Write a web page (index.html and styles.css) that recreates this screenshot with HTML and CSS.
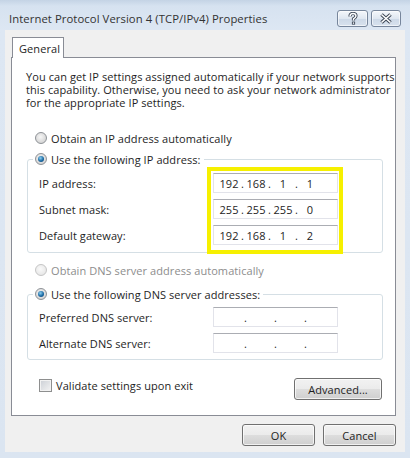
FILE: index.html
```html
<!DOCTYPE html>
<html lang="en">
<head>
    <meta charset="UTF-8">
    <title>Internet Protocol Version 4 (TCP/IPv4) Properties</title>
    <link rel="stylesheet" href="styles.css">
</head>
<body>

    <div class="window">
        <!-- Title bar -->
        <div class="titlebar">
            <span class="title">Internet Protocol Version 4 (TCP/IPv4) Properties</span>
            <div class="caption-buttons">
                <button class="caption-btn">
                    <svg width="12" height="13" viewBox="0 0 12 13">
                        <path d="M3 4.5 Q3 1.5 6 1.5 Q9 1.5 9 4 Q9 5.5 6.5 6.8 L6.5 8.5" fill="none" stroke="#3c4656" stroke-width="3.2"/>
                        <rect x="4.9" y="9.6" width="3.2" height="3" fill="#3c4656"/>
                        <path d="M3 4.5 Q3 1.5 6 1.5 Q9 1.5 9 4 Q9 5.5 6.5 6.8 L6.5 8.5" fill="none" stroke="#fff" stroke-width="1.4"/>
                        <rect x="5.8" y="10.4" width="1.4" height="1.4" fill="#fff"/>
                    </svg>
                </button>
                <button class="caption-btn">
                    <svg width="14" height="11" viewBox="0 0 14 11">
                        <path d="M2.5 1.5 L11.5 9.5 M11.5 1.5 L2.5 9.5" stroke="#3c4656" stroke-width="3.6"/>
                        <path d="M2.5 1.5 L11.5 9.5 M11.5 1.5 L2.5 9.5" stroke="#fff" stroke-width="1.6"/>
                    </svg>
                </button>
            </div>
        </div>

        <div class="client">
            <div class="tabs">
                <div class="tab">General</div>
            </div>

            <div class="panel">
                <div class="intro">
                    <div>You can get IP settings assigned automatically if your network supports</div>
                    <div>this capability. Otherwise, you need to ask your network administrator</div>
                    <div>for the appropriate IP settings.</div>
                </div>

                <div class="option option-first">
                    <span class="radio"></span>
                    <span>Obtain an IP address automatically</span>
                </div>

                <fieldset class="group group-ip">
                    <legend class="option">
                        <span class="radio checked"></span>
                        <span>Use the following IP address:</span>
                    </legend>
                    <div class="fields">
                        <div class="field">
                            <span class="label">IP address:</span>
                            <div class="ipbox"><span>192</span><i>.</i><span>168</span><i>.</i><span>1</span><i>.</i><span>1</span></div>
                        </div>
                        <div class="field">
                            <span class="label">Subnet mask:</span>
                            <div class="ipbox"><span>255</span><i>.</i><span>255</span><i>.</i><span>255</span><i>.</i><span>0</span></div>
                        </div>
                        <div class="field">
                            <span class="label">Default gateway:</span>
                            <div class="ipbox"><span>192</span><i>.</i><span>168</span><i>.</i><span>1</span><i>.</i><span>2</span></div>
                        </div>
                        <div class="highlight"></div>
                    </div>
                </fieldset>

                <div class="option option-dns disabled">
                    <span class="radio"></span>
                    <span>Obtain DNS server address automatically</span>
                </div>

                <fieldset class="group group-dns">
                    <legend class="option">
                        <span class="radio checked"></span>
                        <span>Use the following DNS server addresses:</span>
                    </legend>
                    <div class="fields">
                        <div class="field">
                            <span class="label">Preferred DNS server:</span>
                            <div class="ipbox empty"><span></span><i>.</i><span></span><i>.</i><span></span><i>.</i><span></span></div>
                        </div>
                        <div class="field">
                            <span class="label">Alternate DNS server:</span>
                            <div class="ipbox empty"><span></span><i>.</i><span></span><i>.</i><span></span><i>.</i><span></span></div>
                        </div>
                    </div>
                </fieldset>

                <div class="panel-footer">
                    <label class="check">
                        <span class="checkbox"></span>
                        <span>Validate settings upon exit</span>
                    </label>
                    <button class="btn btn-advanced">Advanced...</button>
                </div>
            </div>

            <div class="dialog-buttons">
                <button class="btn">OK</button>
                <button class="btn">Cancel</button>
            </div>
        </div>
    </div>

</body>
</html>
```
FILE: styles.css
```css
body {
    margin: 0;
    font-family: 'Open Sans', 'Liberation Sans', sans-serif;
    font-size: 11px;
    letter-spacing: 0.07px;
    color: #1e1e1e;
    background-color: #dbe5f1;
}

.window {
    width: 410px;
    height: 458px;
    display: flex;
    flex-direction: column;
    background: linear-gradient(#c4d3e5 0px, #d6e2f0 6px, #dde7f3 30px, #dbe5f1 100%);
    overflow: hidden;
}

/* Title bar */
.titlebar {
    height: 30px;
    display: flex;
    align-items: flex-start;
    justify-content: space-between;
}

.title {
    font-size: 11.3px;
    color: #333;
    margin: 10px 0 0 9px;
    line-height: 17px;
}

.caption-buttons {
    display: flex;
    gap: 3px;
    margin: 10px 9px 0 0;
}

.caption-btn {
    width: 31px;
    height: 17px;
    padding: 0;
    border: 1px solid #77869c;
    border-radius: 3px;
    background: linear-gradient(#f4f7fb, #dfe7f1 50%, #ccd8e7 51%, #d8e2ee);
    display: flex;
    align-items: center;
    justify-content: center;
    box-shadow: inset 0 0 0 1px rgba(255, 255, 255, 0.6);
}

.caption-btn:last-child {
    width: 30px;
}

/* Client area */
.client {
    margin: 0 5px;
    height: 422px;
    background-color: #f0f0f0;
    padding: 7px 0 0 6px;
    box-sizing: border-box;
}

.tabs {
    display: flex;
    padding-left: 1px;
    position: relative;
    z-index: 1;
}

.tab {
    width: 52px;
    height: 21px;
    box-sizing: border-box;
    background: #fff;
    border: 1px solid #898c95;
    border-bottom: none;
    padding-left: 6px;
    line-height: 21px;
    margin-bottom: -1px;
}

.panel {
    width: 385px;
    height: 359px;
    box-sizing: border-box;
    background: #fff;
    border: 1px solid #898c95;
}

.intro {
    margin: 12px 0 0 14px;
    white-space: nowrap;
}

.intro div {
    height: 13px;
    line-height: 13px;
}

.option {
    display: flex;
    align-items: center;
    gap: 4px;
    height: 16px;
}

.option-first {
    margin: 21px 0 0 23px;
}

.option-dns {
    margin: 9px 0 0 23px;
}

.disabled {
    color: #8d8d8d;
}

.radio {
    width: 12px;
    height: 12px;
    border-radius: 50%;
    box-sizing: border-box;
    border: 1px solid #8e9297;
    background: radial-gradient(circle at 45% 40%, #f6f6f6, #d2d2d2 80%);
    position: relative;
}

.radio.checked::after {
    content: "";
    position: absolute;
    left: 2px;
    top: 2px;
    width: 6px;
    height: 6px;
    border-radius: 50%;
    background: radial-gradient(circle at 40% 35%, #8ed0f2, #1b6aa3 55%, #0e3f70);
}

.disabled .radio {
    border-color: #c5c5c5;
    background: radial-gradient(circle at 45% 40%, #fafafa, #e6e6e6 80%);
}

/* Group boxes */
.group {
    width: 356px;
    margin: 5px 0 0 15px;
    padding: 0 0 7px 0;
    box-sizing: border-box;
    border: 1px solid #d5dfe5;
    border-radius: 3px;
}

.group legend {
    margin-left: 5px;
    padding: 0 3px 0 2px;
}

.group-dns {
    margin-top: 8px;
    padding-bottom: 6px;
}

.fields {
    position: relative;
    display: flex;
    flex-direction: column;
    gap: 6px;
    margin-top: 6px;
    padding-left: 11px;
}

.group-dns .fields {
    margin-top: 5px;
}

.field {
    display: flex;
    align-items: center;
    height: 20px;
}

.label {
    width: 174px;
}

.ipbox {
    width: 125px;
    height: 20px;
    box-sizing: border-box;
    border: 1px solid #e2e3ea;
    border-top-color: #abadb3;
    display: flex;
    align-items: center;
    padding-left: 5px;
}

.ipbox span {
    width: 20px;
    text-align: center;
}

.ipbox i {
    font-style: normal;
    width: 7px;
    text-align: center;
}

.ipbox.empty span {
    width: 23px;
}

.highlight {
    position: absolute;
    left: 179px;
    top: -6px;
    width: 136px;
    height: 87px;
    box-sizing: border-box;
    border: 4px solid #f6f000;
    pointer-events: none;
}

/* Footer of panel */
.panel-footer {
    display: flex;
    justify-content: space-between;
    align-items: flex-start;
    margin: 18px 13px 0 27px;
}

.check {
    display: flex;
    align-items: center;
    gap: 4px;
    height: 14px;
}

.checkbox {
    width: 13px;
    height: 13px;
    box-sizing: border-box;
    border: 1px solid #8e8f8f;
    background: linear-gradient(135deg, #cbcfd5, #f4f4f4);
    box-shadow: inset 0 0 0 1px #f2f2f2;
}

.btn {
    width: 73px;
    height: 22px;
    padding: 0;
    font-family: inherit;
    font-size: 11px;
    letter-spacing: 0.07px;
    color: #1e1e1e;
    border: 1px solid #707070;
    border-radius: 3px;
    background: linear-gradient(#f2f2f2, #ebebeb 50%, #dddddd 51%, #cfcfcf);
    box-shadow: inset 0 0 0 1px rgba(255, 255, 255, 0.7);
}

.btn-advanced {
    width: 88px;
}

.dialog-buttons {
    display: flex;
    justify-content: flex-end;
    gap: 8px;
    margin: 8px 9px 0 0;
}
```
